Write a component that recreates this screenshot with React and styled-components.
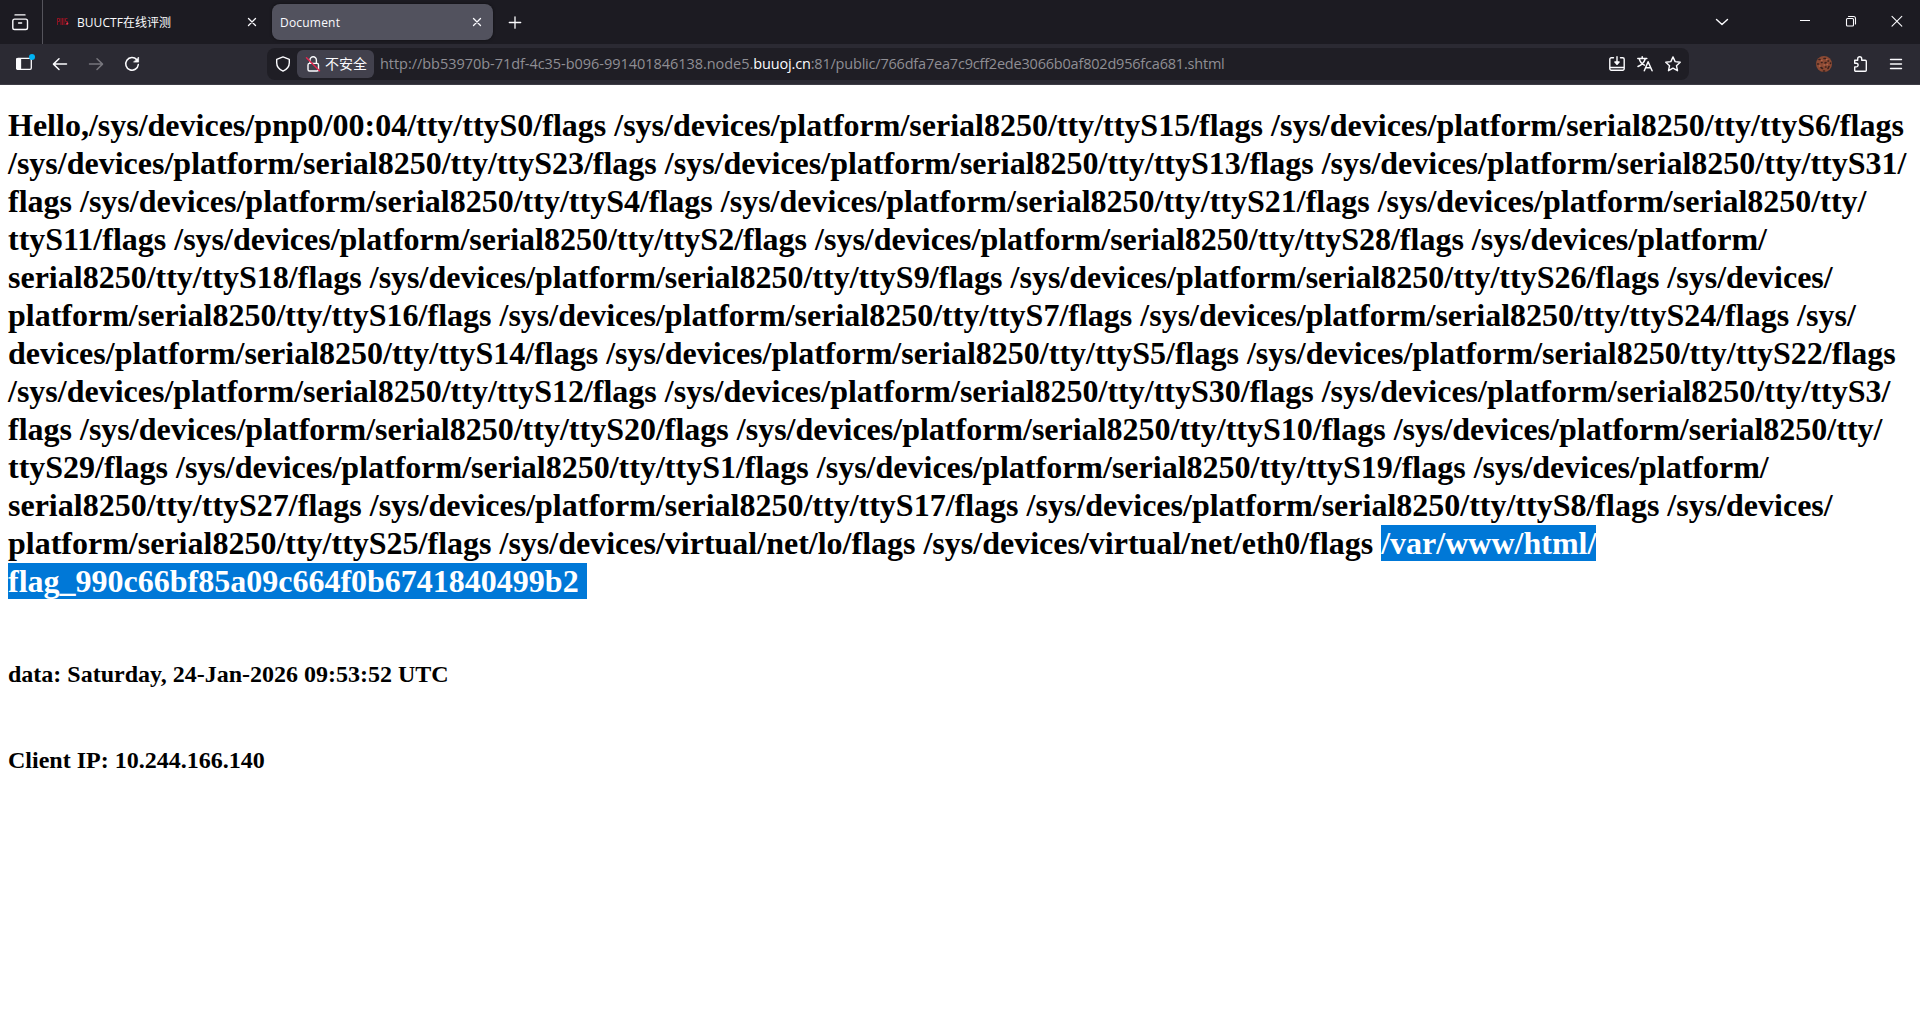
import React from 'react';
import styled, { createGlobalStyle } from 'styled-components';

const GlobalStyle = createGlobalStyle`
  * {
    box-sizing: border-box;
  }
  body {
    margin: 0;
    background: #ffffff;
  }
`;

const Browser = styled.div`
  display: flex;
  flex-direction: column;
  height: 1032px;
  overflow: hidden;
  color: #fbfbfe;
  font-family: 'Open Sans', 'Noto Sans CJK SC', sans-serif;
`;

const TabBar = styled.div`
  display: flex;
  align-items: center;
  height: 44px;
  background: #1c1b22;
`;

const TabSeparator = styled.div`
  width: 1px;
  height: 44px;
  margin-right: 4px;
  background: #55545c;
`;

const Tab = styled.div`
  display: flex;
  align-items: center;
  width: 221px;
  height: 36px;
  margin-right: 4px;
  padding: 0 4px 0 8px;
  border-radius: 8px;
  background: ${(props) => (props.$active ? '#52525e' : 'transparent')};
  box-shadow: ${(props) => (props.$active ? '0 0 3px rgba(0, 0, 0, 0.5)' : 'none')};
`;

const TabTitle = styled.div`
  flex: 1;
  padding-top: 2px;
  font-size: 12px;
  line-height: 18px;
  letter-spacing: ${(props) => props.$spacing || '0'};
  white-space: nowrap;
`;

const Favicon = styled.svg`
  width: 16px;
  height: 16px;
  margin-right: 6px;
`;

const IconButton = styled.div`
  display: flex;
  align-items: center;
  justify-content: center;
  flex: none;
  width: ${(props) => props.$width || 36}px;
  height: 32px;
  color: ${(props) => (props.$disabled ? '#77767d' : '#fbfbfe')};
  svg {
    display: block;
    overflow: visible;
  }
`;

const WindowControls = styled.div`
  display: flex;
  align-items: center;
  margin-left: auto;
  padding-bottom: 2px;
`;

const TabListButton = styled(IconButton)`
  margin-right: 42px;
`;

const ToolBar = styled.div`
  display: flex;
  align-items: center;
  height: 41px;
  padding: 0 6px;
  background: #2b2a33;
  border-bottom: 1px solid #3d3c45;
`;

const UrlBar = styled.div`
  display: flex;
  align-items: center;
  width: 1422px;
  height: 32px;
  margin-left: 117px;
  padding: 0 2px;
  border-radius: 8px;
  background: #1f1e25;
`;

const SecurityChip = styled.div`
  display: flex;
  align-items: center;
  width: 77px;
  height: 28px;
  padding-left: 8px;
  border-radius: 6px;
  background: #42414d;
  font-family: 'Noto Sans CJK SC', sans-serif;
  font-size: 14px;
  line-height: 26px;
  white-space: nowrap;
  svg {
    flex: none;
    margin-right: 4px;
    overflow: visible;
  }
`;

const ChipLabel = styled.span`
  height: 28px;
`;

const Url = styled.div`
  flex: 1;
  display: flex;
  margin-left: 6px;
  font-size: 14.5px;
  line-height: 28px;
  color: #8f8e94;
  white-space: nowrap;
`;

const UrlPart = styled.span`
  letter-spacing: ${(props) => props.$spacing};
  color: ${(props) => (props.$host ? '#fbfbfe' : 'inherit')};
`;

const Extensions = styled.div`
  display: flex;
  margin-left: auto;
`;

const Page = styled.div`
  flex: 1;
  padding: 21px 8px 0;
  background: #ffffff;
  color: #000000;
  font-family: 'Liberation Serif', serif;
  font-weight: bold;
`;

const Greeting = styled.h1`
  margin: 0;
  font-size: 32px;
  line-height: 38px;
  white-space: pre;
`;

const Info = styled.h2`
  margin: ${(props) => props.$top}px 0 0;
  font-size: 24px;
  line-height: 28px;
`;

const Selected = styled.span`
  background: #0078d7;
  color: #ffffff;
`;

const Icon = ({ children, size = 16, stroke = 1.4 }) => (
  <svg
    width={size}
    height={size}
    viewBox={`0 0 ${size} ${size}`}
    fill="none"
    stroke="currentColor"
    strokeWidth={stroke}
    strokeLinecap="round"
    strokeLinejoin="round"
  >
    {children}
  </svg>
);

const lines = [
  'Hello,/sys/devices/pnp0/00:04/tty/ttyS0/flags /sys/devices/platform/serial8250/tty/ttyS15/flags /sys/devices/platform/serial8250/tty/ttyS6/flags',
  '/sys/devices/platform/serial8250/tty/ttyS23/flags /sys/devices/platform/serial8250/tty/ttyS13/flags /sys/devices/platform/serial8250/tty/ttyS31/',
  'flags /sys/devices/platform/serial8250/tty/ttyS4/flags /sys/devices/platform/serial8250/tty/ttyS21/flags /sys/devices/platform/serial8250/tty/',
  'ttyS11/flags /sys/devices/platform/serial8250/tty/ttyS2/flags /sys/devices/platform/serial8250/tty/ttyS28/flags /sys/devices/platform/',
  'serial8250/tty/ttyS18/flags /sys/devices/platform/serial8250/tty/ttyS9/flags /sys/devices/platform/serial8250/tty/ttyS26/flags /sys/devices/',
  'platform/serial8250/tty/ttyS16/flags /sys/devices/platform/serial8250/tty/ttyS7/flags /sys/devices/platform/serial8250/tty/ttyS24/flags /sys/',
  'devices/platform/serial8250/tty/ttyS14/flags /sys/devices/platform/serial8250/tty/ttyS5/flags /sys/devices/platform/serial8250/tty/ttyS22/flags',
  '/sys/devices/platform/serial8250/tty/ttyS12/flags /sys/devices/platform/serial8250/tty/ttyS30/flags /sys/devices/platform/serial8250/tty/ttyS3/',
  'flags /sys/devices/platform/serial8250/tty/ttyS20/flags /sys/devices/platform/serial8250/tty/ttyS10/flags /sys/devices/platform/serial8250/tty/',
  'ttyS29/flags /sys/devices/platform/serial8250/tty/ttyS1/flags /sys/devices/platform/serial8250/tty/ttyS19/flags /sys/devices/platform/',
  'serial8250/tty/ttyS27/flags /sys/devices/platform/serial8250/tty/ttyS17/flags /sys/devices/platform/serial8250/tty/ttyS8/flags /sys/devices/',
];

const CloseIcon = () => (
  <Icon stroke={1.3}>
    <path d="M4.5 4.5l7 7M11.5 4.5l-7 7" />
  </Icon>
);

const Tabs = () => (
  <TabBar>
    <IconButton $width={42}>
      <Icon>
        <path d="M2 .9h10" />
        <rect x="-.2" y="5.1" width="14.7" height="10.4" rx="1.8" />
        <path d="M5.6 9h3" />
      </Icon>
    </IconButton>
    <TabSeparator />
    <Tab>
      <Favicon viewBox="0 0 16 16" fill="none" stroke="#8c1423" strokeWidth="1">
        <path d="M2.5 4v7M2.5 4.5h2v3h-2M6 4v7M7.5 4v7M9 4v7M12.5 4.5h-2v3h2v3h-2" />
        <circle cx="12.3" cy="9.5" r="1.1" fill="#e8384f" stroke="none" />
      </Favicon>
      <TabTitle $spacing="0.05px">BUUCTF在线评测</TabTitle>
      <IconButton $width={24}>
        <CloseIcon />
      </IconButton>
    </Tab>
    <Tab $active>
      <TabTitle $spacing="0.2px">Document</TabTitle>
      <IconButton $width={24}>
        <CloseIcon />
      </IconButton>
    </Tab>
    <IconButton>
      <Icon stroke={1.3}>
        <path d="M8 2.8v11.4M2.3 8.5h11.4" />
      </Icon>
    </IconButton>
    <WindowControls>
      <TabListButton>
        <Icon>
          <path d="M2.5 6.4L8 11.6l5.500-5.200" />
        </Icon>
      </TabListButton>
      <IconButton $width={46}>
        <Icon stroke={1}>
          <path d="M3.5 7.5h9" strokeLinecap="square" />
        </Icon>
      </IconButton>
      <IconButton $width={46}>
        <Icon stroke={1.1}>
          <rect x="3.5" y="5.5" width="7" height="7.5" rx="1" />
          <path d="M5.5 3.5h5a2 2 0 0 1 2 2v5.5" />
        </Icon>
      </IconButton>
      <IconButton $width={46}>
        <Icon stroke={1.1}>
          <path d="M3 3.3l9.8 9.8M12.8 3.3L3 13.1" />
        </Icon>
      </IconButton>
    </WindowControls>
  </TabBar>
);

const Navigation = () => (
  <ToolBar>
    <IconButton>
      <Icon stroke={1.3}>
        <rect x=".7" y="2.4" width="14.6" height="10.9" rx="1.3" />
        <path d="M.7 3h3.8v9.700H.7z" fill="currentColor" />
        <circle cx="16" cy="1" r="3" fill="#00b3f4" stroke="none" />
      </Icon>
    </IconButton>
    <IconButton>
      <Icon stroke={1.5}>
        <path d="M14.5 8.1h-13M7 2.7L1.5 8.1 7 13.5" />
      </Icon>
    </IconButton>
    <IconButton $disabled>
      <Icon stroke={1.5}>
        <path d="M1.5 8.1h13M9 2.7l5.5 5.4L9 13.5" />
      </Icon>
    </IconButton>
    <IconButton>
      <Icon stroke={1.5}>
        <path d="M12.8 3.7A6.3 6.3 0 1 0 14.3 8.6" />
        <path d="M14.6 1.4v4.7H9.9z" fill="currentColor" strokeWidth=".7" />
      </Icon>
    </IconButton>
    <UrlBar>
      <IconButton $width={28}>
        <Icon>
          <path d="M8 .9l6.3 2.4v3.4c0 3.6-2.4 6.7-6.3 8.4-3.9-1.7-6.3-4.8-6.3-8.4V3.3z" />
        </Icon>
      </IconButton>
      <SecurityChip>
        <Icon>
          <rect x="3" y="7.4" width="10.5" height="7.6" rx="1.5" />
          <path d="M5 7.2V4a3.2 3.2 0 0 1 6.4 0v3.2" />
          <path d="M1.5 1.7l13 13" stroke="#e22850" strokeWidth="1.5" />
        </Icon>
        <ChipLabel>不安全</ChipLabel>
      </SecurityChip>
      <Url>
        <UrlPart $spacing="-0.04px">http://bb53970b-71df-4c35-b096-991401846138.node5.</UrlPart>
        <UrlPart $host $spacing="-0.15px">
          buuoj.cn
        </UrlPart>
        <UrlPart $spacing="-0.2px">
          :81/public/766dfa7ea7c9cff2ede3066b0af802d956fca681.shtml
        </UrlPart>
      </Url>
      <IconButton $width={28}>
        <Icon>
          <path d="M4.5 1.7H2.3A1.5 1.5 0 0 0 .8 3.2v9.6a1.5 1.5 0 0 0 1.5 1.5h11.4a1.5 1.5 0 0 0 1.5-1.5V3.2a1.5 1.5 0 0 0-1.5-1.5h-2.2M1 11.5h14" />
          <path d="M8 .8v7" />
          <path d="M5.9 6L8 8.3 10.1 6z" fill="currentColor" />
        </Icon>
      </IconButton>
      <IconButton $width={28}>
        <Icon stroke={1.5}>
          <path d="M.8 2.5h9M5.2.8v1.7M2.2 2.7c.8 3.4 3.2 5.5 5.2 6.500M8.300 2.700C7.300 6 4.500 8.800 1 10.500M7.300 14.700l3.800-8.900 4 8.900M8.800 11.700h5" />
        </Icon>
      </IconButton>
      <IconButton $width={28}>
        <Icon>
          <path d="M8 .9l2.15 4.7 5.1.6-3.8 3.45 1.05 5.05L8 12.2l-4.5 2.5 1.05-5.05L.75 6.2l5.1-.6z" />
        </Icon>
      </IconButton>
    </UrlBar>
    <Extensions>
      <IconButton>
        <Icon>
          <circle cx="8" cy="8" r="8" fill="#8c4a34" stroke="none" />
          <path
            d="M3 3.5h1M8 2.5h1.5M12 5h.5M5.5 6.5h.5M1.5 8h1M9 7l1-.5M5 11.5l1.5 1M9.5 11h.5M13 10.5l-1 2M7.5 15h1M14.5 7v.5"
            stroke="#3a211c"
            strokeWidth="1.6"
          />
          <path d="M5.5 4.5h.5M11 8.5h.5M3.5 10h.5M8 9h.5M10.5 3.5h.5" stroke="#b5664a" />
        </Icon>
      </IconButton>
      <IconButton>
        <Icon>
          <path d="M2.7 4.3h3V2.7a2 2 0 0 1 4 0v1.6h3.6a1 1 0 0 1 1 1v9a1 1 0 0 1-1 1H3.7a1 1 0 0 1-1-1v-3.4h1.6a1.8 1.8 0 0 0 0-3.6H2.7z" />
        </Icon>
      </IconButton>
      <IconButton>
        <Icon>
          <path d="M2.5 3.5h11M2.5 8h11M2.5 12.5h11" />
        </Icon>
      </IconButton>
    </Extensions>
  </ToolBar>
);

const App = () => {
  return (
    <Browser>
      <GlobalStyle />
      <Tabs />
      <Navigation />
      <Page>
        <Greeting>
          {lines.join('\n') + '\n'}
          {'platform/serial8250/tty/ttyS25/flags /sys/devices/virtual/net/lo/flags /sys/devices/virtual/net/eth0/flags '}
          <Selected>{'/var/www/html/'}</Selected>
          {'\n'}
          <Selected>{'flag_990c66bf85a09c664f0b6741840499b2 '}</Selected>
        </Greeting>
        <Info $top={60}>data: Saturday, 24-Jan-2026 09:53:52 UTC</Info>
        <Info $top={58}>Client IP: 10.244.166.140</Info>
      </Page>
    </Browser>
  );
};

export default App;
